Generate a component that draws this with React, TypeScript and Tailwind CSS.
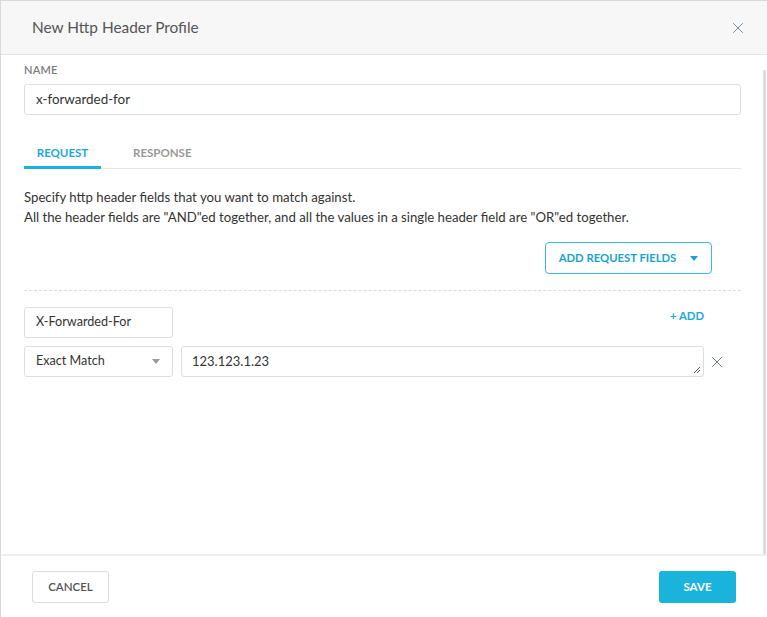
import { X } from 'lucide-react';

function Caret({ className = '' }: { className?: string }) {
  return (
    <svg width="8" height="5" viewBox="0 0 8 5" className={className}>
      <path d="M0 0h8L4 5z" fill="currentColor" />
    </svg>
  );
}

export default function App() {
  return (
    <div className="w-[767px] h-[617px] flex flex-col bg-white border-l border-t border-[#d9d9d9] font-['Lato','Open_Sans',sans-serif] text-[#333]">
      {/* Header */}
      <div className="h-[54px] shrink-0 flex items-center justify-between pl-[31px] pr-[20px] bg-[#f7f7f7] border-b border-[#e2e2e2]">
        <h2 className="text-[15.4px] text-[#555]">New Http Header Profile</h2>
        <X size={18} strokeWidth={1.3} className="text-[#7a8591]" />
      </div>

      {/* Body */}
      <div className="flex-1 flex min-h-0">
        <div className="flex-1 pl-[23px] pr-[22px]">
          <div className="mt-[8px] text-[11px] leading-[14px] font-semibold text-[#7b7b7b] tracking-[0.02em]">NAME</div>
          <div className="mt-[7px] h-[31px] flex items-center px-[11px] border border-[#dedede] rounded-[3px] text-[13.4px] text-[#333]">
            x-forwarded-for
          </div>

          {/* Tabs */}
          <div className="mt-[31px] flex border-b border-[#e5e5e5] text-[11.5px] leading-[14px] font-bold">
            <div className="w-[77px] pb-[6px] text-center text-[#1ba9d9] border-b-[3px] border-[#1ab3de] -mb-px">REQUEST</div>
            <div className="ml-[32px] pb-[6px] text-[#999]">RESPONSE</div>
          </div>

          <p className="mt-[18px] text-[13.2px] leading-[20px] text-[#333]">
            Specify http header fields that you want to match against.
            <br />
            All the header fields are "AND"ed together, and all the values in a single header field are "OR"ed together.
          </p>

          <div className="mt-[15px] flex justify-end pr-[29px]">
            <button className="h-[32px] w-[167px] flex items-center justify-center gap-[14px] border border-[#36b9e3] rounded-[4px] text-[11.3px] font-bold text-[#1ba2d1]">
              ADD REQUEST FIELDS
              <Caret />
            </button>
          </div>

          <div className="mt-[16px] border-t border-dashed border-[#dcdcdc]" />

          {/* Field rows */}
          <div className="mt-[16px] flex items-start justify-between pr-[37px]">
            <div className="w-[149px] h-[31px] flex items-center px-[11px] border border-[#dedede] rounded-[3px] text-[12.6px]">
              X-Forwarded-For
            </div>
            <span className="mt-[1px] text-[11.3px] font-bold text-[#1ba9d9]">+ ADD</span>
          </div>
          <div className="mt-[8px] flex items-center">
            <div className="w-[149px] h-[31px] flex items-center justify-between pl-[11px] pr-[12px] border border-[#dedede] rounded-[3px] text-[12.6px]">
              Exact Match
              <Caret className="text-[#999]" />
            </div>
            <div className="ml-[8px] w-[523px] h-[31px] relative flex items-center px-[10px] border border-[#dedede] rounded-[3px] text-[13px]">
              123.123.1.23
              <svg width="8" height="8" viewBox="0 0 8 8" className="absolute right-[2px] bottom-[2px]">
                <path d="M7 1L1 7M7 4L4 7" stroke="#555" strokeWidth="1" />
              </svg>
            </div>
            <X size={18} strokeWidth={1.3} className="ml-[4px] text-[#6b7682]" />
          </div>
        </div>
        <div className="w-[3px] mr-[1px] mt-[15px] bg-[#dddddd]" />
      </div>

      {/* Footer */}
      <div className="h-[63px] shrink-0 flex items-center justify-between pl-[31px] pr-[31px] border-t-2 border-[#eeeeee]">
        <button className="w-[77px] h-[32px] border border-[#dcdcdc] rounded-[3px] text-[11.5px] font-semibold text-[#555]">CANCEL</button>
        <button className="w-[77px] h-[32px] bg-[#1ab3dc] rounded-[3px] text-[11.5px] font-bold text-white">SAVE</button>
      </div>
    </div>
  );
}
